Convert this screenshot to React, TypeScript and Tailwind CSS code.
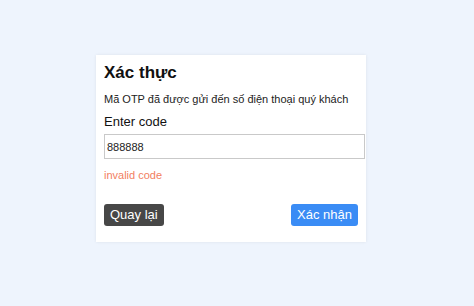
export default function App() {
  return (
    <div className="w-[474px] h-[306px] bg-[#eef4fd] pt-[55px] pl-[96px] font-['Liberation_Sans',Arial,sans-serif]">
      <div className="w-[270px] bg-white px-2 pt-2 pb-4 shadow-[0_0_3px_rgba(0,0,0,0.08)]">
        <h1 className="text-[17px] leading-[20px] font-bold text-[#111]">Xác thực</h1>
        <p className="mt-[9px] text-[11px] leading-[14px] text-[#222]">Mã OTP đã được gửi đến số điện thoại quý khách</p>
        <div className="mt-[8px] text-[13px] leading-[16px] text-[#111]">Enter code</div>
        <input
          readOnly
          value="888888"
          className="mt-[4px] block w-[261px] h-[25px] border border-[#c9c9c9] px-[2px] text-[11px] text-[#222] outline-none"
        />
        <div className="mt-[9px] text-[11px] leading-[14px] text-[#f2805f]">invalid code</div>
        <div className="mt-[22px] flex justify-between">
          <button className="h-[22px] px-[6px] rounded-[3px] bg-[#474747] text-white text-[13px] leading-[22px]">Quay lại</button>
          <button className="h-[22px] px-[6px] rounded-[3px] bg-[#3a8cf5] text-white text-[13px] leading-[22px]">Xác nhận</button>
        </div>
      </div>
    </div>
  );
}
